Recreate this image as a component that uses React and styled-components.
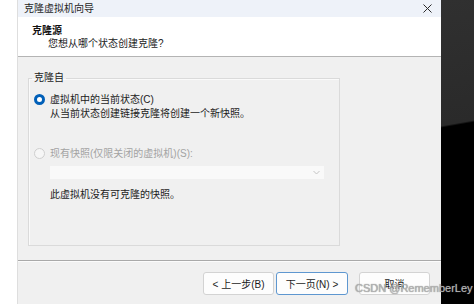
import React from 'react';
import styled, { createGlobalStyle } from 'styled-components';

const GlobalStyle = createGlobalStyle`
  html, body {
    margin: 0;
    padding: 0;
    background: #ffffff;
  }
  body {
    font-family: "Liberation Sans", "Noto Sans CJK SC", sans-serif;
  }
`;

const Screen = styled.div`
  position: relative;
  display: flex;
  width: 474px;
  height: 304px;
  overflow: hidden;
`;

const LeftGap = styled.div`
  width: 17px;
  flex: none;
  background: #ffffff;
`;

const Wizard = styled.div`
  width: 423px;
  flex: none;
  display: flex;
  flex-direction: column;
  border-left: 1px solid #dedede;
  font-size: 10px;
  line-height: 13px;
  color: #1b1b1b;
`;

const Desktop = styled.div`
  flex: 1;
  background: linear-gradient(170deg, #303030 0, #2a2a2a 124px, #000000 126px);
`;

const TitleBar = styled.div`
  height: 17px;
  display: flex;
  align-items: center;
  justify-content: space-between;
  padding: 0 9px 0 6px;
  background: #eef2f9;
`;

const TitleText = styled.span`
  font-size: 10px;
  color: #1f1f1f;
`;

const Header = styled.div`
  height: 40px;
  box-sizing: border-box;
  background: #ffffff;
  border-bottom: 1px solid #b4b4b4;
  padding: 7px 0 0 14px;
`;

const HeaderTitle = styled.div`
  font-weight: bold;
  color: #111;
`;

const HeaderSub = styled.div`
  padding-left: 16px;
  color: #222;
`;

const Body = styled.div`
  height: 203px;
  box-sizing: border-box;
  padding: 15px 101px 14px 10px;
  background: #f0f0f0;
  display: flex;
`;

const GroupBox = styled.fieldset`
  flex: 1;
  margin: 0;
  padding: 0 5px;
  min-width: 0;
  border: 1px solid #dadada;
  box-shadow: inset 1px 1px 0 #fafafa;
`;

const Legend = styled.legend`
  padding: 0 2px;
  margin-left: -2px;
  line-height: 12px;
  color: #1b1b1b;
`;

const RadioRow = styled.label`
  display: flex;
  align-items: center;
  gap: 5px;
  height: 13px;
  margin-top: ${(p) => p.$top}px;
  color: ${(p) => (p.$disabled ? '#a3a3a3' : '#1b1b1b')};
`;

const RadioDot = styled.span`
  width: 11px;
  height: 11px;
  box-sizing: border-box;
  border-radius: 50%;
  flex: none;
  ${(p) =>
    p.$checked
      ? `background: #ffffff; border: 3.5px solid #005fb8;`
      : `background: #f6f6f6; border: 1px solid #cfcfcf;`}
`;

const Indented = styled.div`
  margin: ${(p) => p.$top}px 0 0 16px;
`;

const Select = styled.div`
  height: 13px;
  width: 274px;
  margin: 6px 0 0 16px;
  background: #f9f9f9;
  display: flex;
  align-items: center;
  justify-content: flex-end;
  padding-right: 4px;
  box-sizing: border-box;
`;

const Footer = styled.div`
  flex: 1;
  border-top: 1px solid #a9a9a9;
  background: #f0f0f0;
  display: flex;
  justify-content: flex-end;
  align-items: flex-start;
  padding: 11px 11px 0 0;
  box-shadow: inset 0 1px 0 #fbfbfb;
`;

const Button = styled.button`
  width: ${(p) => (p.$wide ? 72 : 71)}px;
  height: 23px;
  margin-left: ${(p) => p.$gap}px;
  box-sizing: border-box;
  border: 1px solid ${(p) => (p.$primary ? '#5e97d0' : '#d3d3d3')};
  border-radius: 3px;
  background: #fdfdfd;
  font-family: "Liberation Sans", "Noto Sans CJK SC", sans-serif;
  font-size: 10px;
  color: #1b1b1b;
  padding: 0;
`;

const Watermark = styled.div`
  position: absolute;
  left: 355px;
  top: 282px;
  font-family: "Liberation Sans", sans-serif;
  font-size: 11px;
  line-height: 13px;
  color: #b5b5b5;
  text-shadow: 0 0 1px #777;
  white-space: nowrap;
`;

const CloseIcon = () => (
  <svg width="9" height="9" viewBox="0 0 9 9">
    <path d="M0.5 0.5 L8.5 8.5 M8.5 0.5 L0.5 8.5" stroke="#2b2b2b" strokeWidth="1" />
  </svg>
);

const Chevron = () => (
  <svg width="7" height="5" viewBox="0 0 7 5">
    <path d="M0.5 1 L3.5 4 L6.5 1" fill="none" stroke="#c4c4c4" strokeWidth="1" />
  </svg>
);

export default function App() {
  return (
    <>
      <GlobalStyle />
      <Screen>
        <LeftGap />
        <Wizard>
          <TitleBar>
            <TitleText>克隆虚拟机向导</TitleText>
            <CloseIcon />
          </TitleBar>
          <Header>
            <HeaderTitle>克隆源</HeaderTitle>
            <HeaderSub>您想从哪个状态创建克隆?</HeaderSub>
          </Header>
          <Body>
            <GroupBox>
              <Legend>克隆自</Legend>
              <RadioRow $top={9}>
                <RadioDot $checked />
                虚拟机中的当前状态(C)
              </RadioRow>
              <Indented $top={1}>从当前状态创建链接克隆将创建一个新快照。</Indented>
              <RadioRow $top={27} $disabled>
                <RadioDot />
                现有快照(仅限关闭的虚拟机)(S):
              </RadioRow>
              <Select>
                <Chevron />
              </Select>
              <Indented $top={9}>此虚拟机没有可克隆的快照。</Indented>
            </GroupBox>
          </Body>
          <Footer>
            <Button>&lt; 上一步(B)</Button>
            <Button $primary $wide $gap={2}>下一页(N) &gt;</Button>
            <Button $gap={11}>取消</Button>
          </Footer>
        </Wizard>
        <Desktop />
        <Watermark>CSDN @RememberLey</Watermark>
      </Screen>
    </>
  );
}
